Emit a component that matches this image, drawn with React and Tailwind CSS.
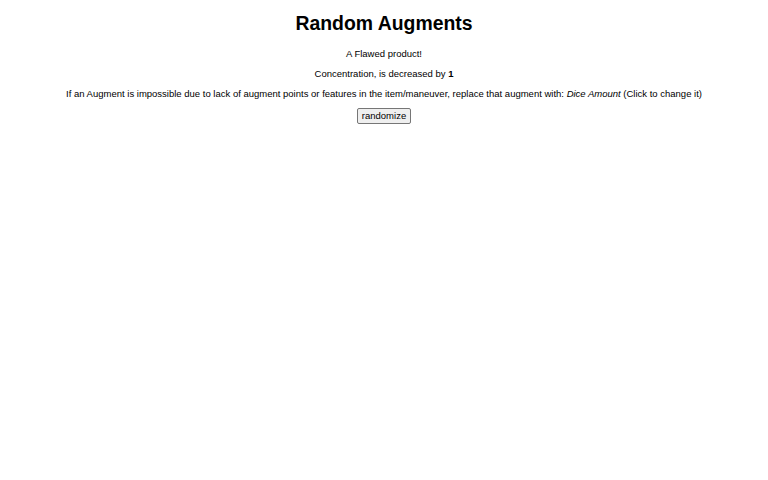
import React, { useState } from 'react';

const OPTIONS = ['Dice Amount', 'Dice Size', 'Range', 'Duration'];

const App = () => {
  const [fallback, setFallback] = useState(0);

  return (
    <div className="min-h-screen bg-white text-black text-center font-['Liberation_Sans',Arial,sans-serif]">
      <div className="flex flex-col items-center pt-[12px]">
        <h1 className="text-[19.4px] leading-[23px] font-bold">Random Augments</h1>

        <div className="mt-[13px] flex flex-col items-center gap-[8px] text-[9.5px] leading-[12px]">
          <p>A Flawed product!</p>
          <p>
            Concentration, is decreased by <b>1</b>
          </p>
          <p>
            If an Augment is impossible due to lack of augment points or features in the item/maneuver, replace that augment with:{' '}
            <i className="cursor-pointer" onClick={() => setFallback((fallback + 1) % OPTIONS.length)}>
              {OPTIONS[fallback]}
            </i>{' '}
            (Click to change it)
          </p>
        </div>

        <button className="mt-[8px] h-[16px] px-[4px] text-[9.5px] leading-[12px] bg-[#efefef] border border-[#767676] rounded-[2px]">
          randomize
        </button>
      </div>
    </div>
  );
};

export default App;
